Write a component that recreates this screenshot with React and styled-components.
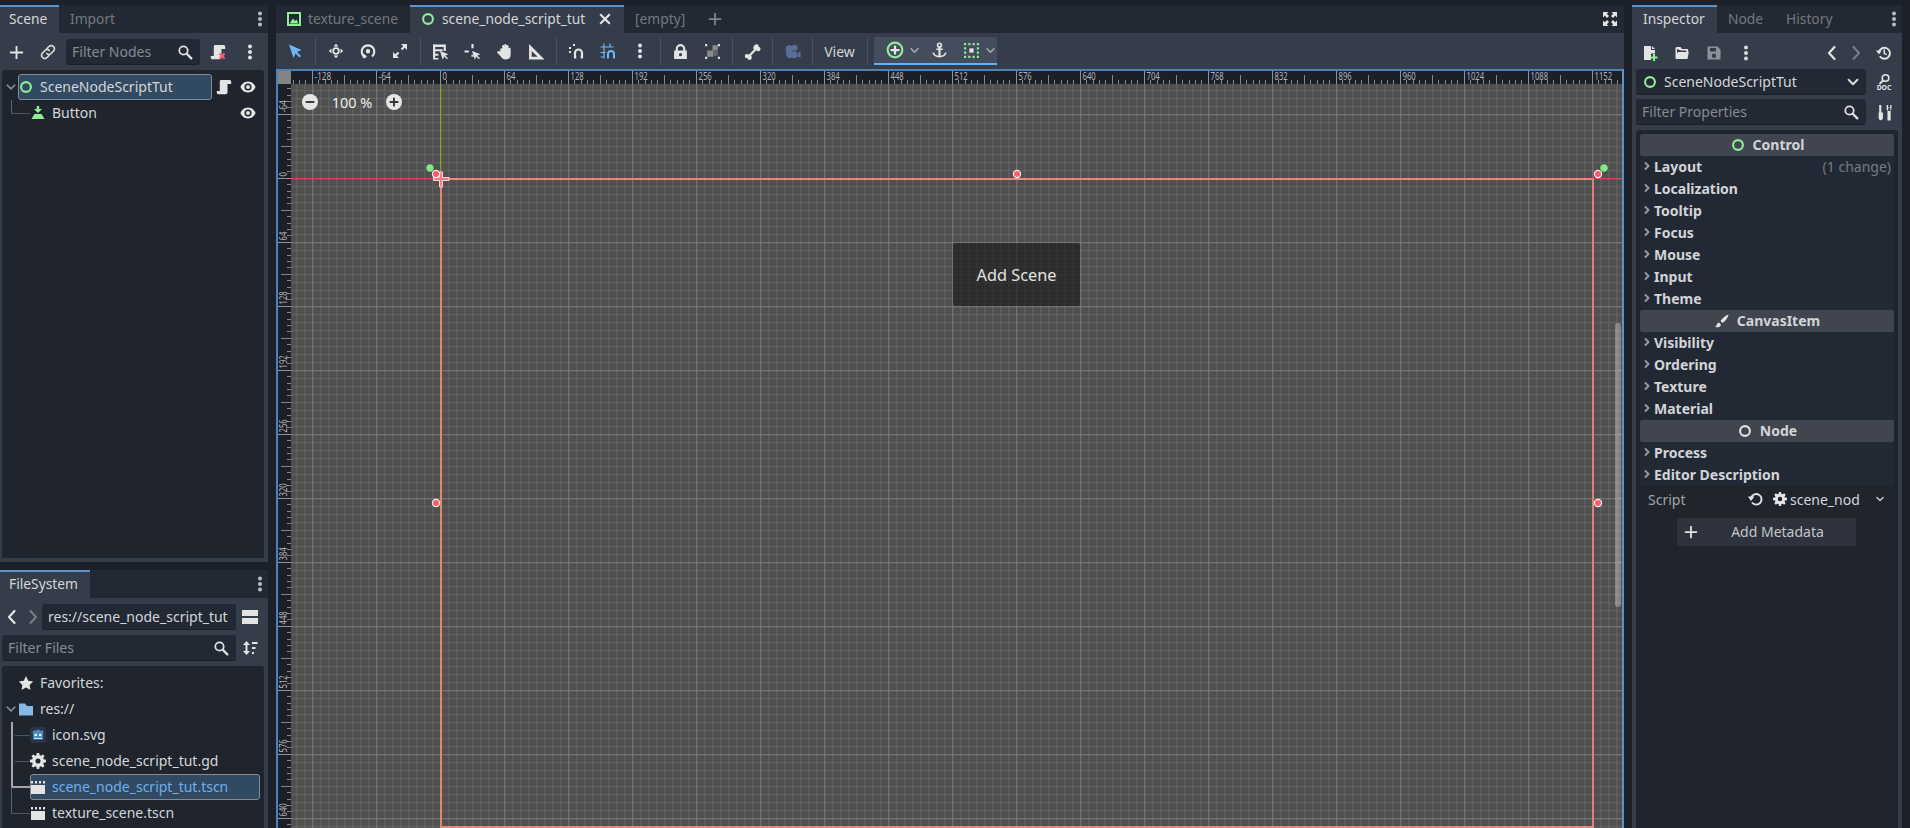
import React from "react";
import styled, { createGlobalStyle } from "styled-components";

const Global = createGlobalStyle`
  html, body { margin: 0; padding: 0; background: #1c2029; overflow: hidden; }
  #root { width: 1910px; height: 828px; }
  * { box-sizing: border-box; }
`;

const BLUE = "#5a94cf";
const TXT = "#d4d6da";
const DIM = "#73787f";

const Shell = styled.div`
  width: 1910px; height: 828px; padding-top: 5px; background: #1c2029;
  display: grid; grid-template-columns: 268px 1348px 270px; column-gap: 8px;
  font-family: "Noto Sans", sans-serif; font-size: 14px; color: ${TXT}; overflow: hidden;
`;
const Column = styled.div`display: flex; flex-direction: column; gap: 8px; min-height: 0;`;
const Dock = styled.section`
  display: flex; flex-direction: column; background: #363d4a; min-height: 0;
  flex: ${p => p.$h ? `0 0 ${p.$h}px` : "1 1 0"}; overflow: hidden;
`;
const TabBar = styled.div`
  display: flex; align-items: stretch; height: 28px; flex: none; background: #232934;
`;
const Tab = styled.div`
  display: flex; align-items: center; gap: ${p => p.$gap ?? 6}px; width: ${p => p.$w}px; padding: 0 0 4px ${p => p.$pl}px; flex: none;
  font-size: 13.8px; white-space: nowrap; color: ${p => p.$active ? TXT : DIM};
  background: ${p => p.$active ? "#363d4a" : "transparent"};
  border-top: 2px solid ${p => p.$active ? BLUE : "transparent"};
  & > svg, & > div { margin-top: 2px; }
`;
const Spacer = styled.div`flex: 1;`;
const IconSlot = styled.div`
  flex: none; display: flex; align-items: center; justify-content: center;
  width: ${p => p.$w ?? 32}px; height: ${p => p.$h ?? 26}px; margin-left: ${p => p.$ml ?? 0}px;
`;
const ToolRow = styled.div`
  display: flex; align-items: center; flex: none; height: ${p => p.$h ?? 36}px;
  padding: ${p => p.$pad ?? "0"};
`;
const Field = styled.div`
  display: flex; align-items: center; justify-content: space-between; height: 26px; flex: none;
  width: ${p => p.$w}px; margin-left: ${p => p.$ml ?? 0}px; padding: 0 ${p => p.$pr ?? 7}px 0 ${p => p.$pl ?? 6}px;
  background: #232934; border-radius: 3px; border-bottom: 1px solid #1b1f27;
  color: ${p => p.$bright ? TXT : "#878b92"}; white-space: nowrap; overflow: hidden;
`;
const TreePanel = styled.div`
  flex: 1; margin: ${p => p.$m}; padding-top: 4px; background: #1f242d; border-radius: 3px 3px 0 0; min-height: 0;
`;
const TreeRow = styled.div`
  position: relative; display: flex; align-items: center; height: 26px;
`;
const CaretSlot = styled.div`flex: none; width: 16px; padding-left: 2px; display: flex; justify-content: center;`;
const NameBox = styled.div`
  flex: none; display: flex; align-items: center; gap: 6px; height: 26px; width: ${p => p.$w ?? 190}px;
  margin-left: ${p => p.$ml ?? 0}px; white-space: nowrap; border-radius: 3px; padding-bottom: 1px;
  color: ${p => p.$accent ? "#6db0ef" : TXT};
  ${p => p.$selected ? "background:#324a61; border:1px solid #7f8b98;" : "border:1px solid transparent;"}
  & > svg { margin-left: -1px; }
`;
const Branch = styled.span`
  position: absolute; left: ${p => p.$l}px; top: ${p => p.$t}px; width: ${p => p.$w}px; height: ${p => p.$h}px;
  ${p => p.$v !== false ? `border-left: ${p.$bold ? 2 : 1}px solid ${p.$bold ? "#a3a7ad" : "#5b616b"};` : ""}
  border-bottom: ${p => p.$bold ? 2 : 1}px solid ${p => p.$bold ? "#a3a7ad" : "#4d535d"};
`;
const Sep = styled.div`
  flex: none; width: ${p => p.$w ?? 8}px; height: 28px; display: flex; justify-content: center;
  &::after { content: ""; width: 1px; height: 100%; background: #4a515e; }
`;
const ViewLabel = styled.div`flex: none; width: 47px; text-align: center; color: ${TXT};`;
const ActiveGroup = styled.div`
  flex: none; display: flex; align-items: center; width: 123px; height: 28px; margin-left: 3px; padding-left: 6px;
  background: #434d5e; border-bottom: 2px solid #69b0f0; border-radius: 2px 2px 0 0;
`;
const Viewport = styled.div`
  position: relative; flex: 1; min-height: 0; background: #505050;
`;
const CanvasArt = styled.svg`display: block; width: 100%; height: 100%;`;
const ZoomBar = styled.div`
  position: absolute; left: 26px; top: 24px; display: flex; align-items: center; height: 18px; color: #eee; font-size: 14.5px;
`;
const ZoomBtn = styled.div`
  width: 16px; height: 16px; border-radius: 50%; background: #e6e6e6; display: flex; align-items: center; justify-content: center; flex: none;
`;
const ZoomPct = styled.div`width: 68px; text-align: center; white-space: nowrap;`;
const SceneButton = styled.div`
  position: absolute; left: 677px; top: 174px; width: 127px; height: 63px; background: rgba(22,22,22,.62); border-radius: 2px;
  display: flex; align-items: center; justify-content: center; font-size: 16.3px; color: #e2e2e2;
`;
const Grabber = styled.div`
  position: absolute; right: 3px; top: 254px; width: 6px; height: 284px; border-radius: 3px; background: rgba(255,255,255,.3);
`;
const PropsPanel = styled.div`
  flex: 1; margin: 0 4px; padding: 4px; background: #1f242d; min-height: 0; border-radius: 3px 3px 0 0;
`;
const Category = styled.div`
  display: flex; align-items: center; justify-content: center; gap: 7px; height: 22px; background: #40454f;
  font-weight: 700; color: #d2d4d8; border-radius: 2px; padding-bottom: 1px;
`;
const Section = styled.div`
  display: flex; align-items: center; height: 22px; padding: 0 3px 2px; background: #232934; font-weight: 700; color: #d2d4d8; gap: 3px;
`;
const Note = styled.span`margin-left: auto; font-weight: 400; color: #767b83;`;
const PropRow = styled.div`
  display: flex; align-items: center; height: 28px; padding: 0 0 2px 8px; white-space: nowrap; color: #a0a4aa;
`;
const PropName = styled.div`width: 100px; flex: none;`;
const ScriptGear = styled.span`display: flex; margin: 0 3px 0 9px;`;
const PropValue = styled.div`color: ${TXT}; width: 85px; overflow: hidden; flex: none;`;
const MetaButton = styled.div`
  position: relative; display: flex; align-items: center; justify-content: center; width: 179px; height: 28px; margin: 4px 0 0 37px;
  padding: 0 0 2px 22px; background: #2d323c; border-radius: 3px; color: #c4c6ca;
  & > svg { position: absolute; left: 7px; top: 7px; }
`;
const NameInline = styled.span`flex: 1; margin-left: 6px;`;

const Svg = styled.svg`flex: none; display: block; color: ${p => p.$c ?? "#e4e4e4"};`;
const I = ({ s = 16, c, children, ...r }) => (
  <Svg $c={c} width={s} height={s} viewBox="0 0 16 16" fill="currentColor" {...r}>{children}</Svg>
);
const L = { fill: "none", stroke: "currentColor", strokeWidth: 2, strokeLinecap: "round", strokeLinejoin: "round" };

const Ring = ({ c = "#8eef97", s = 16 }) => <I s={s} c={c}><circle cx="8" cy="8" r="4.9" fill="none" stroke="currentColor" strokeWidth="2.1" /></I>;
const PlusI = ({ s = 16, c }) => <I s={s} c={c}><path d="M7 1h2v6h6v2H9v6H7V9H1V7h6z" /></I>;
const Dots = ({ c = "#b9bcc1" }) => <I c={c}><circle cx="8" cy="2.5" r="2" /><circle cx="8" cy="8" r="2" /><circle cx="8" cy="13.5" r="2" /></I>;
const SearchI = ({ c = "#e0e0e0" }) => <I c={c}><circle cx="6.5" cy="6.5" r="4.2" {...L} strokeWidth="1.8" /><path d="M10 10l4.3 4.3" {...L} strokeWidth="2.4" /></I>;
const LinkI = () => <I c="#d8d8d8"><path d="M7 4.5l2-2a3 3 0 014.5 4.5l-2.5 2.5a3 3 0 01-4.2 0" {...L} strokeWidth="1.7" /><path d="M9 11.5l-2 2A3 3 0 012.5 9L5 6.5a3 3 0 014.2 0" {...L} strokeWidth="1.7" /></I>;
const Scroll = ({ x }) => <I><path d="M5 1h8.5c1 0 1.7.8 1.7 1.8V5H11.5v8.5c0 1-.8 1.7-1.8 1.7H2.5C1.5 15.2.8 14.4.8 13.4V12h3V2.8C3.8 1.8 4 1 5 1z" />{x && <path d="M9.5 9.5l5 5m0-5l-5 5" fill="none" stroke="#ff5f5f" strokeWidth="2" />}</I>;
const Eye = () => <I><path fillRule="evenodd" d="M8 2.5c4 0 6.7 3 7.5 5.5-.8 2.500-3.500 5.500-7.500 5.500S1.300 10.500.5 8C1.300 5.500 4 2.500 8 2.500zM8 4.500a3.500 3.500 0 100 7 3.500 3.500 0 000-7z" /><circle cx="8" cy="8" r="2" /></I>;
const BtnI = () => <I c="#8eef97"><path d="M6.800 1h2.400v3h2.800L8 8 4 4h2.800zM4.500 9h7l3 5h-13z" /></I>;
const Caret = ({ c = "#7e848c", s = 12 }) => <I s={s} c={c}><path d="M3 5.500l5 5 5-5" {...L} strokeWidth="2.400" /></I>;
const ChevR = ({ c = "#9a9ea4" }) => <I s={8} c={c}><path d="M5 2l6 6-6 6" {...L} strokeWidth="3.600" /></I>;
const Lt = ({ c = "#e4e4e4" }) => <I c={c}><path d="M10.500 2L5 8l5.500 6" {...L} strokeWidth="2.200" /></I>;
const Rt = ({ c = "#767a81" }) => <I c={c}><path d="M5.500 2L11 8l-5.500 6" {...L} strokeWidth="2.200" /></I>;
const TextureI = () => <I c="#8eef97"><path fillRule="evenodd" d="M1 1h14v14H1zm2 2v10h10V3z" /><path d="M3.500 12.500l3.500-5 2 2.500 1.500-1.500 2 4z" /></I>;
const CloseI = () => <I s={14}><path d="M2.500 2.500l11 11m0-11l-11 11" {...L} strokeWidth="2.400" strokeLinecap="butt" /></I>;
const Select = () => <I c="#6fb6f5"><path d="M2 1.500l12.500 5.500-4.500 2 4 4-1.500 1.500-4-4-2 4.500z" /></I>;
const Move = () => <I><path d="M8 .8L10.500 3.500h-5zM8 15.200L5.500 12.500h5zM.8 8L3.500 5.500v5zM15.200 8L12.500 10.500v-5z" /><circle cx="8" cy="8" r="2.800" fill="none" stroke="currentColor" strokeWidth="1.800" /></I>;
const Rotate = () => <I><path d="M4 13.500a6.300 6.300 0 118 0" {...L} strokeLinecap="butt" strokeWidth="2.200" /><path d="M4.500 15.500l-2-1 1-4 3.500 3zM8 6a2.200 2.200 0 110 4.400A2.200 2.200 0 018 6z" /></I>;
const Scale = () => <I><path d="M9 1h6v6l-2.200-2.200-2.500 2.500L8.700 5.700l2.500-2.500zM7 15H1V9l2.200 2.200 2.500-2.500 1.600 1.600-2.500 2.500z" /></I>;
const ListSel = () => <I s={17}><path d="M1 1.500h11v2.200H1zM1 5.800h9v2H1zM1 10h5v2H1zM1 14h5v1.500H1z" /><path d="M1 1.500h2V15H1zM11 1.500h2v6h-2z" /><path d="M7.500 7.500l8 3-3 1.300 2.500 2.500-1 1-2.500-2.500-1.300 3z" /></I>;
const Pivot = () => <I s={17}><path d="M.5 7h4v2h-4zM7 1h2v4H7zM7 11h2v2H7z" /><path d="M7.500 7.500l8 3-3 1.300 2.500 2.500-1 1-2.500-2.500-1.300 3z" /></I>;
const Hand = () => <I s={17}><path d="M4 6c0-1.500 1.800-1.500 1.800 0V3c0-1.500 2-1.500 2 0V2c0-1.500 2-1.500 2 0v1c0-1.500 2-1.500 2 0v2.500c0-1.500 2-1.500 2 0V11c0 3-2 4.500-4.500 4.500-2.500 0-3.500-1-5-3L1.500 9.500C.5 8 2.500 7 3.500 8L4 8.600z" /></I>;
const RulerI = () => <I s={17}><path fillRule="evenodd" d="M1 1l14.500 14.500H1zm2.500 6.500v5.500H9z" /></I>;
const SmartSnap = () => <I><path d="M1 4h2v2H1zM5 1h2v2H5zM1 8h2v2H1z" /><path d="M7 15V10a3.500 3.500 0 017 0v5" {...L} strokeLinecap="butt" strokeWidth="2.200" /><path d="M6 13h2.200v2.500H6zM12.800 13H15v2.500h-2.200z" /></I>;
const GridSnap = () => <I c="#6fb6f5"><path d="M4 .5v15M10 .5v4M.5 4h13M.5 9.500h5M.5 14h4" {...L} strokeWidth="1.200" strokeLinecap="butt" /><path d="M8 15.500V11a3 3 0 016 0v4.500" {...L} strokeLinecap="butt" strokeWidth="2" /></I>;
const LockI = () => <I s={17}><path fillRule="evenodd" d="M8 1a4.500 4.500 0 014.500 4.500V7H14v8H2V7h1.500V5.500A4.500 4.500 0 018 1zM5.500 7h5V5.500a2.500 2.500 0 00-5 0zM8 9.500a1.500 1.500 0 100 3 1.500 1.500 0 000-3z" /></I>;
const GroupI = () => <I s={17}><path d="M1 1h2v2H1zM13 1h2v2h-2zM1 13h2v2H1zM13 13h2v2h-2z" /><path fill="#8b8b8b" d="M8 2h5v5H8zM3 7h6v6H3z" /><path fill="#5f6670" d="M9 7h4v5H9z" /></I>;
const BoneI = () => <I s={17}><path d="M11 1.500c1.700-.8 3.300.600 2.800 2.300 1.800-.3 2.300 2.400 1 3.400-1 .8-2.400.6-3.300-.3L6.600 12c1 1 .9 2.400.1 3.200-1 1.200-3.700.8-3.400-1-1.700.5-3.100-1.100-2.300-2.800.6-1.300 2.500-1.500 3.500-.4l4.900-4.900c-1.100-1-.9-3.300 1.600-4.600z" /></I>;
const CameraI = () => <I s={17} c="#5a6d99"><circle cx="5" cy="5.500" r="3.500" /><circle cx="10" cy="4.500" r="2.800" /><path d="M2 8h10v6H4.500L2 12zM12.500 9.500l3-1.500v6l-3-1.500z" /></I>;
const AddNode = () => <I s={18}><circle cx="8" cy="8" r="6.500" fill="none" stroke="#8eef97" strokeWidth="1.900" /><path d="M7 4h2v3h3v2H9v3H7V9H4V7h3z" /></I>;
const AnchorI = () => <I s={17}><circle cx="8" cy="3" r="1.800" fill="none" stroke="currentColor" strokeWidth="1.500" /><path d="M7 4.500h2V13H7zM5 6h6v1.600H5z" /><path d="M1.500 9.500c0 3.500 3 5 6.500 5s6.500-1.500 6.500-5l-1.800 1c-.4 1.700-2.400 2.300-4.700 2.300s-4.300-.6-4.700-2.300z" /></I>;
const RectDot = () => <I s={17}><path d="M1 1h2v2H1zM5 1h2v2H5zM9 1h2v2H9zM13 1h2v2h-2zM1 5h2v2H1zM13 5h2v2h-2zM1 9h2v2H1zM13 9h2v2h-2zM1 13h2v2H1zM5 13h2v2H5zM9 13h2v2H9zM13 13h2v2h-2z" fill="#8eef97" /><path d="M6 6h4v4H6z" /></I>;
const FullI = () => <I><path d="M1 1h5.500L4.800 2.800 7 5 5 7 2.800 4.800 1 6.500zM15 1v5.500l-1.800-1.700L11 7 9 5l2.200-2.200L9.500 1zM1 15V9.500l1.800 1.700L5 9l2 2-2.200 2.200L6.500 15zM15 15H9.500l1.700-1.800L9 11l2-2 2.200 2.200L15 9.500z" /></I>;
const NewFile = () => <I><path d="M2 1h7v4h4v3.500H9v6.500H2z" /><path d="M10 1l3 3h-3z" /><path fill="#8eef97" d="M11 9h2v2.500h2.500v2H13V16h-2v-2.500H8.500v-2H11z" /></I>;
const OpenI = () => <I><path fillRule="evenodd" d="M1.500 3.500C1.500 2.500 2 2 3 2h3.500l1.500 2h5c.8 0 1.200.5 1.200 1.200V7H14.800l-1.300 7H2.500c-.6 0-1-.4-1-1zM3 4v5l.8-2h8.500V5.500H7z" /></I>;
const SaveI = () => <I c="#8d9199"><path fillRule="evenodd" d="M1.500 1.500h10l3 3v10h-13zM4 3v3.500h6V3zM8 8.500a2.200 2.200 0 100 4.400 2.200 2.200 0 000-4.400z" /></I>;
const HistI = () => <I><path d="M3 7.500a5.500 5.500 0 11.800 3.700" {...L} strokeLinecap="butt" strokeWidth="1.900" /><path d="M0 5.500h5.500L3 9.500zM7.500 4.500H9V8l2 1-.7 1.200-2.800-1.500z" /></I>;
const DocI = () => (
  <Svg width="18" height="18" viewBox="0 0 18 18" fill="currentColor">
    <circle cx="10.500" cy="5" r="3.300" fill="none" stroke="currentColor" strokeWidth="1.600" />
    <path d="M8 7.500l-3 3" {...L} strokeWidth="1.800" />
    <text x="9" y="16.500" textAnchor="middle" fontSize="6.800" fontWeight="700" fontFamily="Noto Sans, sans-serif" fill="currentColor">DOC</text>
  </Svg>
);
const ToolsI = () => <I s={17}><path d="M9.800 6.500h3v9h-3zM10.500 3h2v4h-2zM9 1v3.500c0 1 .8 2 2.300 2s2.300-1 2.300-2V1h-1.200v2.500h-2V1z" transform="translate(1 0)" /><path d="M2 1h2v7h1.500v5c0 1.300-.8 2.300-2 2.300s-2-1-2-2.300V8H2z" transform="translate(1 0)" /></I>;
const RevertI = () => <I><path d="M4 11.500a5.300 5.300 0 10-.8-4.800" {...L} strokeLinecap="butt" strokeWidth="1.900" /><path d="M0 5.500h6.500L3 10z" /></I>;
const GearI = ({ s = 14 }) => <I s={s}><path fillRule="evenodd" d="M6.800 0h2.400l.4 2.200 1.300.5 1.900-1.300 1.700 1.700-1.300 1.900.5 1.300 2.300.4v2.600l-2.300.4-.5 1.300 1.300 1.900-1.700 1.700-1.900-1.300-1.300.5-.4 2.200H6.800l-.4-2.200-1.300-.5-1.900 1.300-1.700-1.700 1.300-1.900-.5-1.300L0 9.300V6.700l2.300-.4.500-1.300L1.500 3.100l1.700-1.700 1.900 1.300 1.300-.5zM8 5.500a2.500 2.500 0 100 5 2.500 2.500 0 000-5z" /></I>;
const StarI = () => <I><path d="M8 1l2.200 4.700 5 .7-3.600 3.500.9 5L8 12.500l-4.500 2.400.9-5L.8 6.400l5-.7z" /></I>;
const FolderI = () => <I c="#86b9e4"><path d="M1 2.500h6L9 5h6v9.500H1z" /></I>;
const GodotI = () => (
  <I><rect width="16" height="16" rx="2" fill="#2b3344" /><path fill="#478cbf" d="M4 3l1.500 1 1-1.200h3l1 1.200L12 3l1.500 2-.5 2v5.500H3V7l-.5-2z" /><circle cx="5.800" cy="8" r="1.300" fill="#fff" /><circle cx="10.200" cy="8" r="1.300" fill="#fff" /><path d="M4 11h8v.8H4z" fill="#fff" /></I>
);
const ClapI = () => <I><path d="M1 6h14v9H1z" /><path d="M1 2h2v2.500H1zM5 2h2v2.500H5zM9 2h2v2.500H9zM13 2h2v2.500h-2z" /></I>;
const SplitI = () => <I s={16}><path d="M0 1h16v6H0zM0 9h16v6H0z" /></I>;
const SortI = () => <I><path d="M4.500 1L8 5H5.500v6H8l-3.500 4L1 11h2.500V5H1zM10 2h5.500v2H10zM10 7h3.500v2H10zM10 12h2v2h-2z" /></I>;
const MinusG = () => <I s={10} c="#333"><path d="M1 6.500h14v3H1z" /></I>;
const PlusG = () => <I s={10} c="#333"><path d="M6.500 1h3v5.500H15v3H9.500V15h-3V9.500H1v-3h5.500z" /></I>;

const W = 1622, H = 828, X0 = 440, Y0 = 178, LX = 291, TY = 84;
const ks = (lo, hi) => { const o = []; for (let v = lo; v <= hi; v++) o.push(v); return o; };
const gridPath = (major) => {
  let d = "";
  for (let k = -24; k <= 150; k++) {
    const x = X0 + k * 8;
    if (x >= LX && x < W && (k % 8 === 0) === major) d += `M${x} ${TY}h1V${H}h-1z`;
  }
  for (let k = -12; k <= 82; k++) {
    const y = Y0 + k * 8;
    if (y >= TY && y < H && (k % 8 === 0) === major) d += `M${LX} ${y}H${W}v1H${LX}z`;
  }
  return d;
};
const Canvas2D = () => {
  const hs = ks(-24, 185).map(k => ({ k, x: Math.floor(440.3 + k * 6.4) })).filter(t => t.x >= LX && t.x < W);
  const vs = ks(-16, 102).map(k => ({ k, y: Math.floor(178.3 + k * 6.4) })).filter(t => t.y >= TY && t.y < H);
  const font = { fontFamily: "Noto Sans, sans-serif", fontSize: 10, fill: "#b0b2b6" };
  const len = v => { const s = String(v); return s.replace("-", "").length * 4.4 + (v < 0 ? 3.500 : 0); };
  return (
    <CanvasArt viewBox="276 69 1348 759" shapeRendering="crispEdges">
      <g shapeRendering="auto" transform="translate(.3 .3)">
        <path d={gridPath(false)} fill="#666666" />
        <path d={gridPath(true)} fill="#7e7e7e" />
      </g>
      <rect x="276" y="71" width="1348" height="13" fill="#1b1f28" />
      <rect x="276" y="71" width="15" height="757" fill="#1b1f28" />
      <rect x="278" y="71" width="13" height="13" fill="#848484" />
      {hs.map(({ k, x }) => {
        const maj = k % 10 === 0, mid = k % 5 === 0;
        return <rect key={k} x={x} y={maj ? 71 : mid ? 75 : 80} width="1" height={maj ? 13 : mid ? 9 : 4} fill={maj ? "#8f9296" : "#83868b"} />;
      })}
      {vs.map(({ k, y }) => {
        const maj = k % 10 === 0, mid = k % 5 === 0;
        return <rect key={k} x={maj ? 278 : mid ? 281 : 287} y={y} width={maj ? 13 : mid ? 10 : 4} height="1" fill={maj ? "#8f9296" : "#83868b"} />;
      })}
      <g shapeRendering="auto">
        {hs.filter(t => t.k % 10 === 0).map(({ k, x }) => {
          const v = k / 10 * 64;
          return <text key={k} x={x + 2.500} y="80" {...font} textLength={len(v)} lengthAdjust="spacingAndGlyphs">{v}</text>;
        })}
        {vs.filter(t => t.k % 10 === 0).map(({ k, y }) => {
          const v = k / 10 * 64;
          return <text key={k} transform={`translate(287 ${y - 1.500}) rotate(-90)`} {...font} textLength={len(v)} lengthAdjust="spacingAndGlyphs">{v}</text>;
        })}
      </g>
      <rect x="276" y="69" width="1348" height="2" fill="#4f82b3" />
      <rect x="276" y="69" width="2" height="759" fill="#4f82b3" />
      <rect x="1622" y="69" width="2" height="759" fill="#5f93c6" />
      <rect x={LX} y="178" width={W - LX} height="1" fill="#e23f5a" />
      <rect x="440" y={TY} width="1" height="94" fill="#7db100" />
      <rect x="440" y="178" width="2" height="650" fill="#e08a6c" />
      <rect x="441" y="178" width="1153" height="2" fill="#e8877a" />
      <rect x="1592" y="178" width="2" height="650" fill="#e0826f" />
      <rect x="441" y="826" width="1153" height="2" fill="#e8877a" />
      <g shapeRendering="auto">
        <path d="M439.500 172h3v5.500H449v3h-6.500V187h-3v-6.500H433.500v-3h6z" fill="#ee7f86" stroke="#f2d9d9" strokeWidth="1" />
        <circle cx="430" cy="168" r="4.200" fill="#85e98a" stroke="#262626" strokeWidth=".6" />
        <circle cx="1604" cy="168" r="4.200" fill="#85e98a" stroke="#262626" strokeWidth=".6" />
        {[[436, 174], [1017, 174], [1598, 174], [436, 503], [1598, 503]].map(([x, y]) => (
          <circle key={`${x}-${y}`} cx={x} cy={y} r="3.600" fill="#ff5b64" stroke="#f4f0f0" strokeWidth="1.200" />
        ))}
      </g>
    </CanvasArt>
  );
};

export default function App() {
  return (
    <Shell>
      <Global />
      <Column>
        <Dock $h={557}>
          <TabBar>
            <Tab $active $w={59} $pl={9}>Scene</Tab>
            <Tab $w={60} $pl={11}>Import</Tab>
            <Spacer />
            <IconSlot $w={16} $h={28}><Dots /></IconSlot>
          </TabBar>
          <ToolRow $h={37} $pad="6px 0 5px">
            <IconSlot $w={32}><PlusI s={15} /></IconSlot>
            <IconSlot $w={32}><LinkI /></IconSlot>
            <Field $w={134} $ml={2}>Filter Nodes<SearchI /></Field>
            <IconSlot $w={36}><Scroll x /></IconSlot>
            <IconSlot $w={28}><Dots c="#e4e4e4" /></IconSlot>
          </ToolRow>
          <TreePanel $m="0 4px 4px 2px">
            <TreeRow>
              <CaretSlot><Caret /></CaretSlot>
              <NameBox $selected $w={194}><Ring />SceneNodeScriptTut</NameBox>
              <IconSlot $w={24}><Scroll /></IconSlot>
              <IconSlot $w={24}><Eye /></IconSlot>
            </TreeRow>
            <TreeRow>
              <Branch $l={9} $t={0} $w={19} $h={14} />
              <NameBox $ml={28} $w={182}><BtnI />Button</NameBox>
              <IconSlot $w={24} />
              <IconSlot $w={24}><Eye /></IconSlot>
            </TreeRow>
          </TreePanel>
        </Dock>
        <Dock>
          <TabBar>
            <Tab $active $w={90} $pl={9}>FileSystem</Tab>
            <Spacer />
            <IconSlot $w={16} $h={28}><Dots /></IconSlot>
          </TabBar>
          <ToolRow $h={37} $pad="6px 0 5px">
            <IconSlot $w={24}><Lt /></IconSlot>
            <IconSlot $w={18}><Rt /></IconSlot>
            <Field $w={194} $bright $pl={6} $pr={4}>res://scene_node_script_tut</Field>
            <IconSlot $w={28}><SplitI /></IconSlot>
          </ToolRow>
          <ToolRow $h={31} $pad="0 0 5px 2px">
            <Field $w={234} $pl={6}>Filter Files<SearchI /></Field>
            <IconSlot $w={28}><SortI /></IconSlot>
          </ToolRow>
          <TreePanel $m="0 4px 0 2px">
            <TreeRow>
              <CaretSlot />
              <NameBox><StarI />Favorites:</NameBox>
            </TreeRow>
            <TreeRow>
              <CaretSlot><Caret /></CaretSlot>
              <NameBox><FolderI />res://</NameBox>
            </TreeRow>
            <TreeRow>
              <Branch $v={false} $l={13} $t={0} $w={15} $h={14} />
              <NameBox $ml={28}><GodotI />icon.svg</NameBox>
            </TreeRow>
            <TreeRow>
              <Branch $v={false} $l={13} $t={0} $w={15} $h={14} />
              <NameBox $ml={28} $w={200}><GearI s={16} />scene_node_script_tut.gd</NameBox>
            </TreeRow>
            <TreeRow>
              <Branch $bold $l={9} $t={-52} $w={20} $h={66} />
              <NameBox $ml={28} $selected $accent $w={230}><ClapI />scene_node_script_tut.tscn</NameBox>
            </TreeRow>
            <TreeRow>
              <Branch $l={9} $t={-13} $w={19} $h={27} />
              <NameBox $ml={28} $w={200}><ClapI />texture_scene.tscn</NameBox>
            </TreeRow>
          </TreePanel>
        </Dock>
      </Column>

      <Dock>
        <TabBar>
          <Tab $w={134} $pl={10}><TextureI />texture_scene</Tab>
          <Tab $active $w={214} $pl={10}><Ring />scene_node_script_tut<IconSlot $w={14} $h={14} $ml={7}><CloseI /></IconSlot></Tab>
          <Tab $w={84} $pl={11}>[empty]</Tab>
          <IconSlot $w={14} $h={28}><PlusI s={14} c="#80858c" /></IconSlot>
          <Spacer />
          <IconSlot $w={28} $h={28}><FullI /></IconSlot>
        </TabBar>
        <ToolRow $h={36} $pad="0 0 0 3px">
          <IconSlot><Select /></IconSlot>
          <Sep $w={9} />
          <IconSlot><Move /></IconSlot>
          <IconSlot><Rotate /></IconSlot>
          <IconSlot><Scale /></IconSlot>
          <Sep />
          <IconSlot><ListSel /></IconSlot>
          <IconSlot><Pivot /></IconSlot>
          <IconSlot><Hand /></IconSlot>
          <IconSlot><RulerI /></IconSlot>
          <Sep />
          <IconSlot><SmartSnap /></IconSlot>
          <IconSlot><GridSnap /></IconSlot>
          <IconSlot><Dots c="#e4e4e4" /></IconSlot>
          <Sep />
          <IconSlot><LockI /></IconSlot>
          <IconSlot><GroupI /></IconSlot>
          <Sep />
          <IconSlot><BoneI /></IconSlot>
          <Sep />
          <IconSlot><CameraI /></IconSlot>
          <Sep />
          <ViewLabel>View</ViewLabel>
          <Sep />
          <ActiveGroup>
            <IconSlot $w={30}><AddNode /></IconSlot>
            <IconSlot $w={8}><Caret c="#a3a7ad" s={11} /></IconSlot>
            <IconSlot $w={42}><AnchorI /></IconSlot>
            <IconSlot $w={22}><RectDot /></IconSlot>
            <IconSlot $w={16}><Caret c="#a3a7ad" s={11} /></IconSlot>
          </ActiveGroup>
        </ToolRow>
        <Viewport>
          <Canvas2D />
          <ZoomBar>
            <ZoomBtn><MinusG /></ZoomBtn>
            <ZoomPct>100 %</ZoomPct>
            <ZoomBtn><PlusG /></ZoomBtn>
          </ZoomBar>
          <SceneButton>Add Scene</SceneButton>
          <Grabber />
        </Viewport>
      </Dock>

      <Dock>
        <TabBar>
          <Tab $active $w={85} $pl={11}>Inspector</Tab>
          <Tab $w={54} $pl={11}>Node</Tab>
          <Tab $w={70} $pl={15}>History</Tab>
          <Spacer />
          <IconSlot $w={16} $h={28}><Dots /></IconSlot>
        </TabBar>
        <ToolRow $h={36} $pad="3px 2px 0 2px">
          <IconSlot><NewFile /></IconSlot>
          <IconSlot><OpenI /></IconSlot>
          <IconSlot><SaveI /></IconSlot>
          <IconSlot><Dots c="#d8d8d8" /></IconSlot>
          <Spacer />
          <IconSlot $w={24}><Lt /></IconSlot>
          <IconSlot $w={24}><Rt /></IconSlot>
          <IconSlot $w={32}><HistI /></IconSlot>
        </ToolRow>
        <ToolRow $h={30} $pad="0 0 4px 4px">
          <Field $w={230} $bright $pl={6} $pr={6}>
            <Ring />
            <NameInline>SceneNodeScriptTut</NameInline>
            <Caret c="#d8d8d8" s={14} />
          </Field>
          <IconSlot $w={36}><DocI /></IconSlot>
        </ToolRow>
        <ToolRow $h={31} $pad="0 0 5px 4px">
          <Field $w={230}>Filter Properties<SearchI /></Field>
          <IconSlot $w={36}><ToolsI /></IconSlot>
        </ToolRow>
        <PropsPanel>
          <Category><Ring />Control</Category>
          <Section><ChevR />Layout<Note>(1 change)</Note></Section>
          {["Localization", "Tooltip", "Focus", "Mouse", "Input", "Theme"].map(t => <Section key={t}><ChevR />{t}</Section>)}
          <Category><I s={16}><path d="M14.500 1.500c-3 1-6.500 4-8 6.500l2 2c2.500-1.500 5.500-5 6-8.500zM5 9.500c-2 .5-2 2-2.500 3-.3.6-1 1-1.500 1 2 1.500 5 1 6-1.500z" /></I>CanvasItem</Category>
          {["Visibility", "Ordering", "Texture", "Material"].map(t => <Section key={t}><ChevR />{t}</Section>)}
          <Category><Ring c="#e0e0e0" />Node</Category>
          {["Process", "Editor Description"].map(t => <Section key={t}><ChevR />{t}</Section>)}
          <PropRow>
            <PropName>Script</PropName>
            <RevertI />
            <ScriptGear><GearI s={14} /></ScriptGear>
            <PropValue>scene_nod</PropValue>
            <Caret c="#c4c6ca" s={10} />
          </PropRow>
          <MetaButton><PlusI s={14} />Add Metadata</MetaButton>
        </PropsPanel>
      </Dock>
    </Shell>
  );
}
